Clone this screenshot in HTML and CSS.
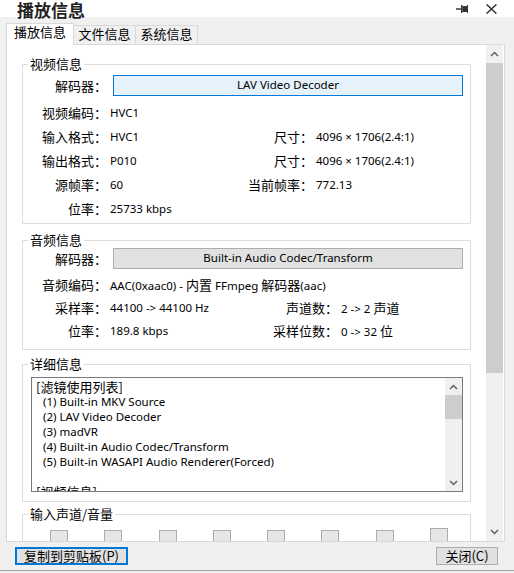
FILE: index.html
```html
<!DOCTYPE html>
<html lang="zh-CN">
<head>
<meta charset="utf-8">
<title>播放信息</title>
<link rel="stylesheet" href="styles.css">
</head>
<body>
<div class="window">
  <div class="titlebar">
    <span class="title">播放信息</span>
    <div class="title-icons">
      <svg class="ico-pin" width="14" height="10" viewBox="0 0 14 10">
        <rect x="1" y="4.3" width="5" height="1.4" fill="#333"/>
        <rect x="6" y="1" width="1.4" height="8" fill="#333"/>
        <rect x="7.4" y="2" width="4.6" height="6" fill="#333"/>
        <rect x="12" y="1" width="1" height="8" fill="#333"/>
      </svg>
      <svg class="ico-close" width="11" height="10" viewBox="0 0 11 10">
        <path d="M0.6 0.4 L10.4 9.6 M10.4 0.4 L0.6 9.6" stroke="#333" stroke-width="1.4" fill="none"/>
      </svg>
    </div>
  </div>

  <div class="tabs">
    <div class="tab active">播放信息</div>
    <div class="tab">文件信息</div>
    <div class="tab">系统信息</div>
  </div>

  <div class="panel">
    <div class="content">
      <fieldset class="group group-video">
        <legend>视频信息</legend>
        <div class="decoder-row">
          <span class="lbl">解码器：</span>
          <div class="decoder decoder-focus">LAV Video Decoder</div>
        </div>
        <div class="grid grid-video">
          <span class="lbl">视频编码：</span><span class="val span">HVC1</span>
          <span class="lbl">输入格式：</span><span class="val">HVC1</span><span class="lbl">尺寸：</span><span class="val">4096 × 1706(2.4:1)</span>
          <span class="lbl">输出格式：</span><span class="val">P010</span><span class="lbl">尺寸：</span><span class="val">4096 × 1706(2.4:1)</span>
          <span class="lbl">源帧率：</span><span class="val">60</span><span class="lbl">当前帧率：</span><span class="val">772.13</span>
          <span class="lbl">位率：</span><span class="val span">25733 kbps</span>
        </div>
      </fieldset>

      <fieldset class="group group-audio">
        <legend>音频信息</legend>
        <div class="decoder-row">
          <span class="lbl">解码器：</span>
          <div class="decoder">Built-in Audio Codec/Transform</div>
        </div>
        <div class="grid grid-audio">
          <span class="lbl">音频编码：</span><span class="val span">AAC(0xaac0) - <span class="cjk">内置</span> FFmpeg <span class="cjk">解码器</span>(aac)</span>
          <span class="lbl">采样率：</span><span class="val">44100 -&gt; 44100 Hz</span><span class="lbl">声道数：</span><span class="val">2 -&gt; 2 <span class="cjk">声道</span></span>
          <span class="lbl">位率：</span><span class="val">189.8 kbps</span><span class="lbl">采样位数：</span><span class="val">0 -&gt; 32 <span class="cjk">位</span></span>
        </div>
      </fieldset>

      <fieldset class="group group-detail">
        <legend>详细信息</legend>
        <div class="textbox">
          <div class="text">
            <div class="line">[滤镜使用列表]</div>
            <div class="line indent">(1) Built-in MKV Source</div>
            <div class="line indent">(2) LAV Video Decoder</div>
            <div class="line indent">(3) madVR</div>
            <div class="line indent">(4) Built-in Audio Codec/Transform</div>
            <div class="line indent">(5) Built-in WASAPI Audio Renderer(Forced)</div>
            <div class="line">&nbsp;</div>
            <div class="line">[视频信息]</div>
          </div>
          <div class="vscroll small">
            <div class="sb-btn"><svg width="9" height="6" viewBox="0 0 9 6"><polyline points="1,5 4.5,1.5 8,5" fill="none" stroke="#606060" stroke-width="1.5"/></svg></div>
            <div class="sb-track"><div class="sb-thumb"></div></div>
            <div class="sb-btn"><svg width="9" height="6" viewBox="0 0 9 6"><polyline points="1,1 4.5,4.5 8,1" fill="none" stroke="#606060" stroke-width="1.5"/></svg></div>
          </div>
        </div>
      </fieldset>

      <fieldset class="group group-input">
        <legend>输入声道/音量</legend>
        <div class="meters">
          <div class="meter"></div>
          <div class="meter"></div>
          <div class="meter"></div>
          <div class="meter"></div>
          <div class="meter"></div>
          <div class="meter"></div>
          <div class="meter"></div>
          <div class="meter tall"></div>
        </div>
      </fieldset>
    </div>
    <div class="vscroll main">
      <div class="sb-btn"><svg width="9" height="6" viewBox="0 0 9 6"><polyline points="1,5 4.5,1.5 8,5" fill="none" stroke="#606060" stroke-width="1.5"/></svg></div>
      <div class="sb-track"><div class="sb-thumb"></div></div>
      <div class="sb-btn"><svg width="9" height="6" viewBox="0 0 9 6"><polyline points="1,1 4.5,4.5 8,1" fill="none" stroke="#606060" stroke-width="1.5"/></svg></div>
    </div>
  </div>

  <div class="footer">
    <button class="btn btn-default">复制到剪贴板(P)</button>
    <button class="btn">关闭(C)</button>
  </div>
</div>
</body>
</html>
```

FILE: styles.css
```css
html, body {
  margin: 0;
  padding: 0;
}

body {
  width: 514px;
  height: 573px;
  overflow: hidden;
  background: #f0f0f0;
  font-family: "Noto Sans CJK SC", sans-serif;
  font-size: 13px;
  color: #000;
}

.window {
  width: 514px;
  height: 573px;
}

/* title bar */
.titlebar {
  height: 17px;
  background: #fff;
  display: flex;
  align-items: flex-start;
  padding-left: 17px;
  padding-right: 17px;
}

.title {
  font-size: 17px;
  line-height: 19px;
  font-weight: bold;
  color: #222;
}

.title-icons {
  margin-left: auto;
  display: flex;
  gap: 17px;
  margin-top: 4px;
}

.title-icons svg {
  display: block;
}

/* tabs */
.tabs {
  margin-top: 6px;
  padding-left: 6px;
  height: 21px;
  display: flex;
  align-items: flex-end;
}

.tab {
  box-sizing: border-box;
  height: 19px;
  width: 63px;
  margin-left: -1px;
  border: 1px solid #d9d9d9;
  border-bottom: none;
  background: #f0f0f0;
  text-align: center;
  line-height: 16px;
}

.tab.active {
  width: 68px;
  height: 22px;
  margin-left: 0;
  margin-bottom: -1px;
  background: #fff;
  position: relative;
  z-index: 1;
}

/* panel */
.panel {
  box-sizing: border-box;
  margin-left: 6px;
  width: 499px;
  height: 498px;
  border: 1px solid #d9d9d9;
  background: #fff;
  display: flex;
}

.content {
  flex: 1;
  min-width: 0;
  overflow: hidden;
  padding: 11px 15px 0;
}

/* scrollbars */
.vscroll {
  width: 17px;
  background: #f0f0f0;
  display: flex;
  flex-direction: column;
  flex-shrink: 0;
}

.vscroll.main {
  margin-right: 1px;
}

.sb-btn {
  height: 18px;
  display: flex;
  align-items: center;
  justify-content: center;
}

.sb-btn svg {
  display: block;
}

.sb-track {
  flex: 1;
}

.main .sb-thumb {
  height: 310px;
  background: #cdcdcd;
}

.small .sb-btn {
  height: 17px;
}

.small .sb-thumb {
  height: 24px;
  background: #cdcdcd;
}

/* group boxes */
.group {
  margin: 0;
  padding: 0;
  border: 1px solid #dcdcdc;
  min-width: 0;
}

.group legend {
  margin-left: 5px;
  padding: 0 2px;
  line-height: 16px;
  font-size: 13px;
}

.group-video {
  padding-bottom: 3px;
}

.group-audio {
  margin-top: 8px;
  padding-bottom: 7px;
}

.group-detail {
  margin-top: 6px;
  padding-bottom: 9px;
}

.group-input {
  margin-top: 4px;
  height: 60px;
}

.lbl {
  text-align: right;
  white-space: nowrap;
}

/* latin text is narrower, as in the system UI font */
.val,
.decoder,
.line.indent {
  font-family: "Noto Sans", "Noto Sans CJK SC", sans-serif;
  font-size: 11.5px;
}

.val {
  white-space: nowrap;
}

.cjk {
  font-family: "Noto Sans CJK SC", sans-serif;
  font-size: 13px;
}

.decoder-row {
  display: flex;
  align-items: center;
  margin-bottom: 4px;
}

.group-video .decoder-row {
  margin-top: 3px;
}

.decoder-row .lbl {
  width: 84px;
  flex-shrink: 0;
}

.decoder {
  box-sizing: border-box;
  width: 350px;
  height: 21px;
  margin-left: 6px;
  border: 1px solid #adadad;
  background: #e1e1e1;
  text-align: center;
  line-height: 18px;
}

.decoder.decoder-focus {
  border-color: #0078d7;
  background: #e5f1fb;
}

.grid {
  display: grid;
  column-gap: 3px;
  align-items: center;
}

.grid-video {
  grid-template-columns: 84px 120px 80px 1fr;
  grid-auto-rows: 24px;
}

.grid-audio {
  grid-template-columns: 84px 145px 80px 1fr;
  grid-auto-rows: 23px;
}

.grid .span {
  grid-column: 2 / -1;
}

/* text box */
.textbox {
  box-sizing: border-box;
  margin-top: 5px;
  margin-left: 8px;
  width: 432px;
  height: 115px;
  border: 1px solid #7a7a7a;
  background: #fff;
  display: flex;
  overflow: hidden;
}

.text {
  flex: 1;
  padding: 1px 0 0 4px;
  overflow: hidden;
}

.line {
  line-height: 15px;
  height: 15px;
  white-space: pre;
}

.line.indent {
  padding-left: 7px;
}

/* meters */
.meters {
  display: flex;
  padding-left: 27px;
  gap: 36.3px;
  margin-top: 8px;
  height: 20px;
}

.meter {
  box-sizing: border-box;
  width: 18px;
  height: 18px;
  border: 1px solid #adadad;
  background: #e6e6e6;
}

.meter.tall {
  margin-top: -2px;
  height: 20px;
}

/* footer */
.footer {
  box-sizing: border-box;
  height: 29px;
  padding: 5px 16px 0 15px;
  display: flex;
  justify-content: space-between;
  align-items: flex-start;
  border-bottom: 1px solid #a0a0a0;
}

.btn {
  box-sizing: border-box;
  height: 18px;
  padding: 0;
  border: 1px solid #adadad;
  background: #e1e1e1;
  font-family: "Noto Sans CJK SC", sans-serif;
  font-size: 13px;
  line-height: 14px;
  color: #000;
  width: 62px;
}

.btn.btn-default {
  width: 113px;
  border: 2px solid #0078d7;
}
```
